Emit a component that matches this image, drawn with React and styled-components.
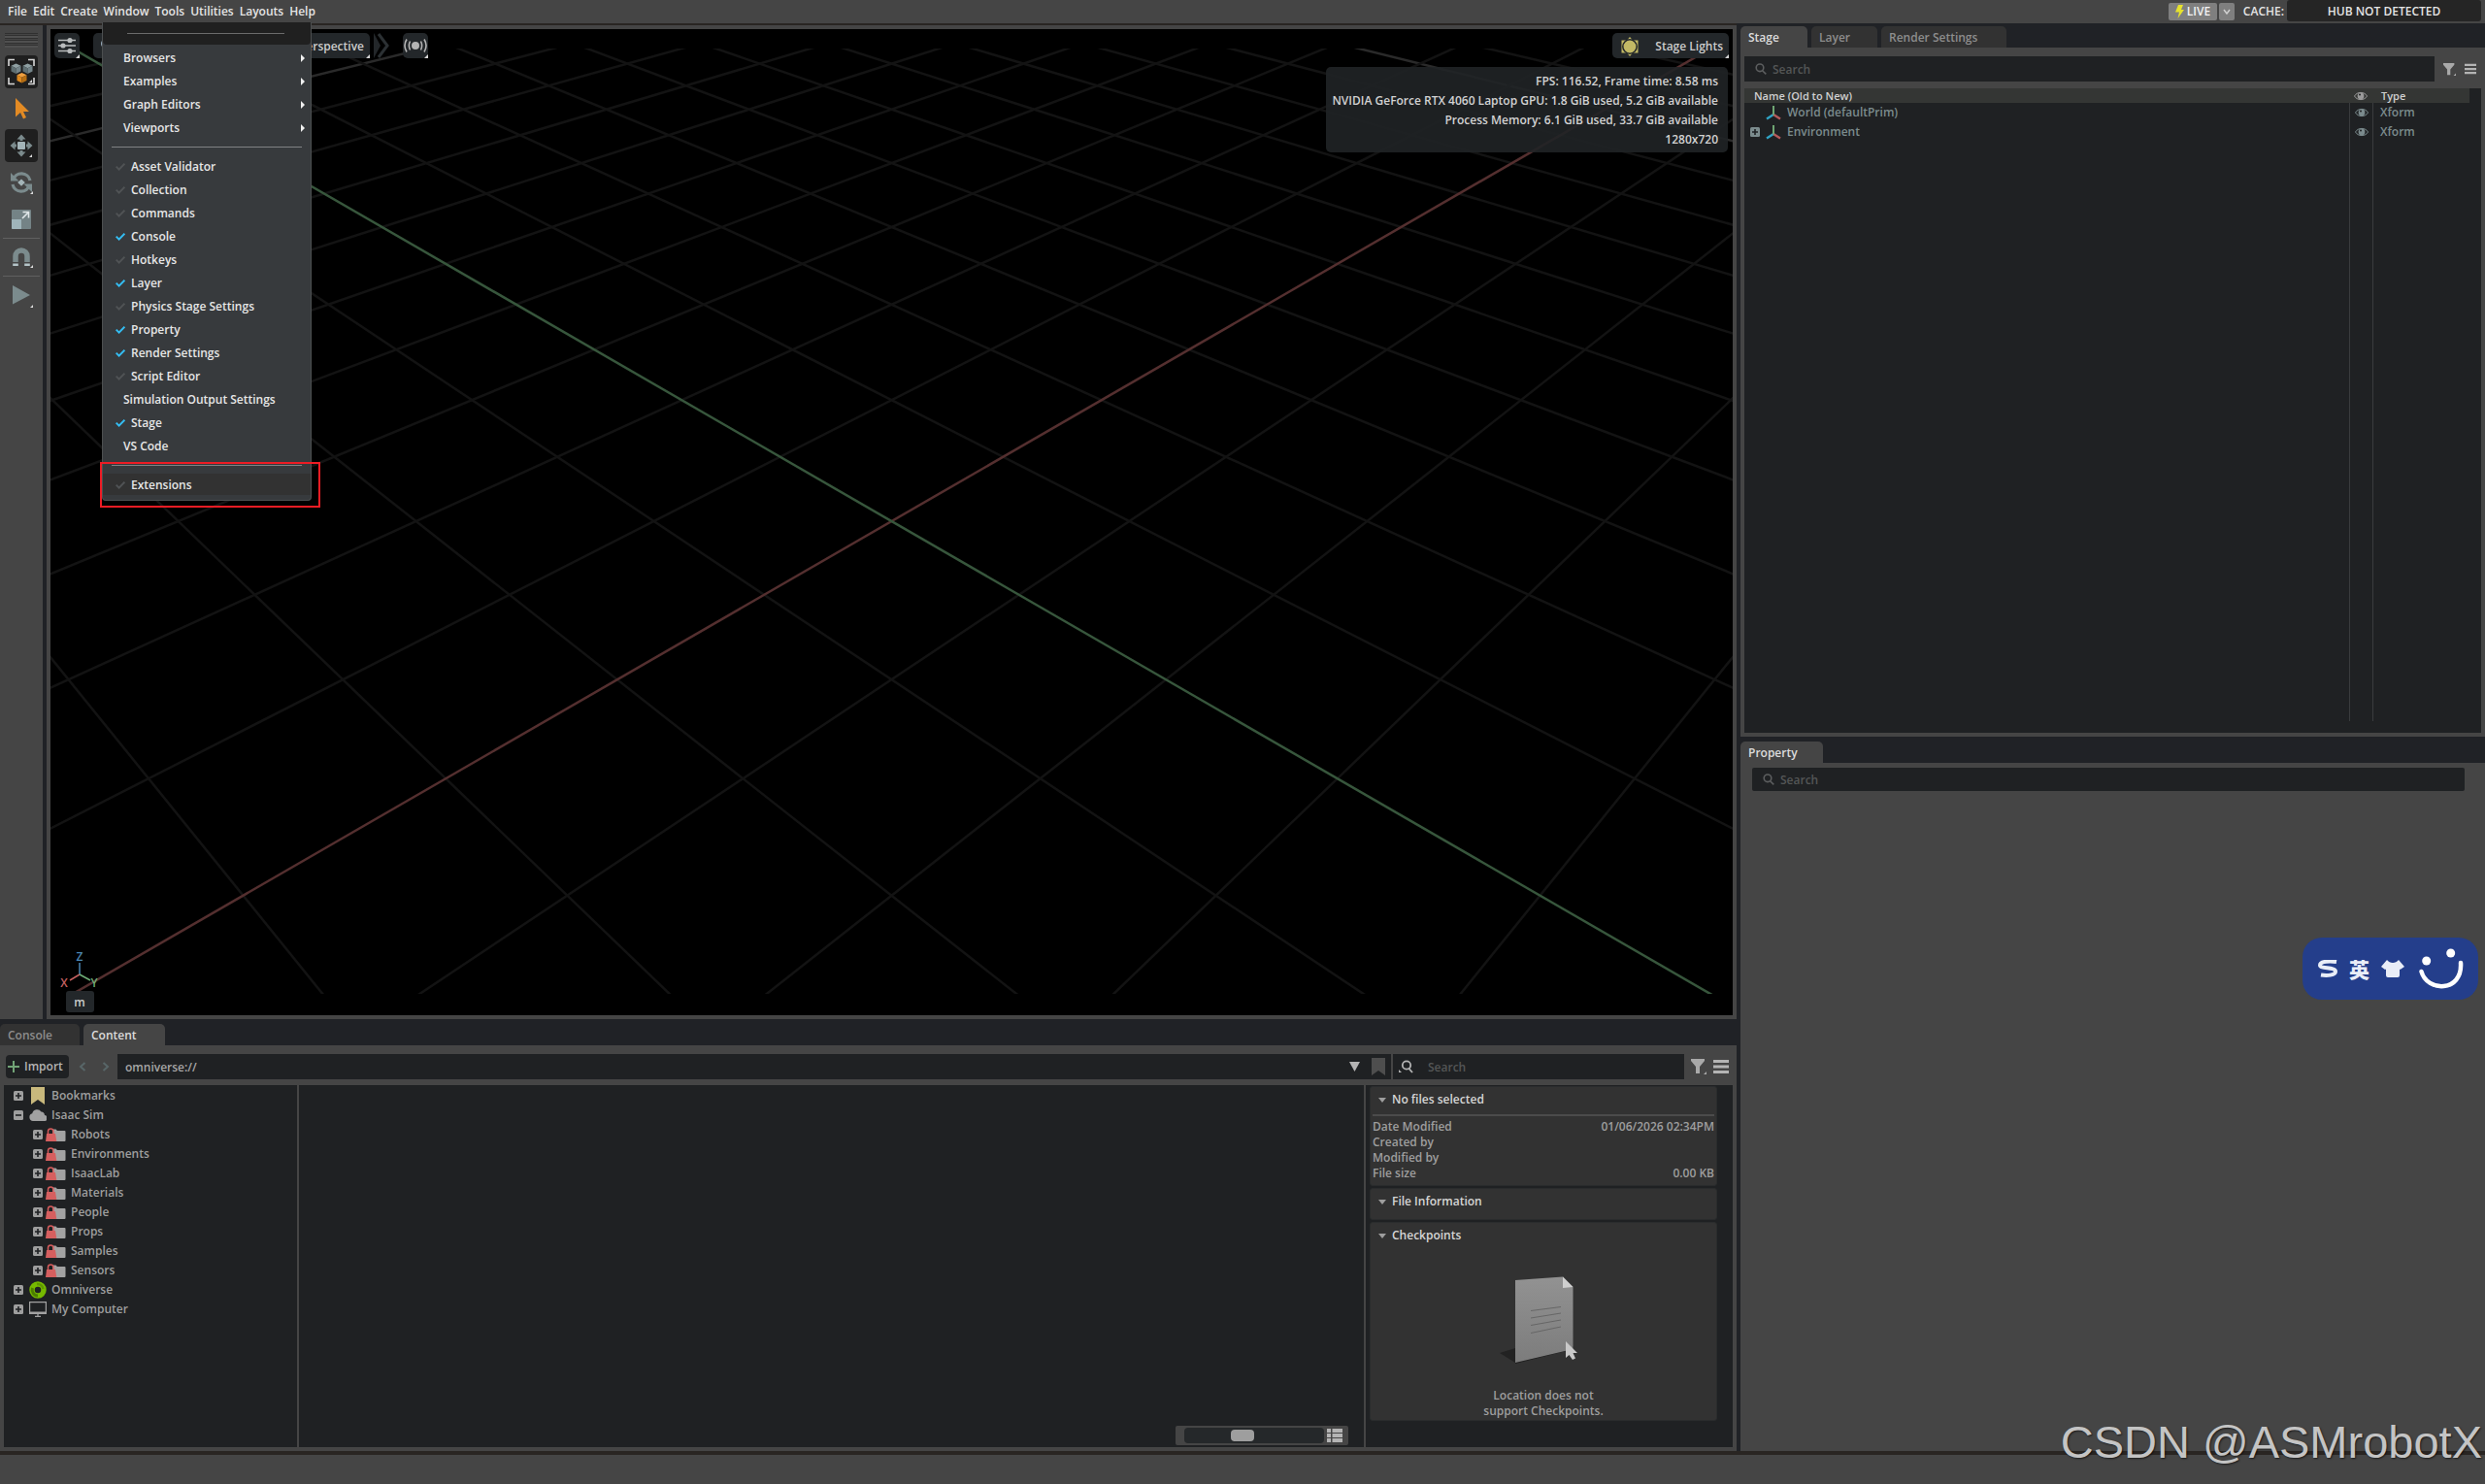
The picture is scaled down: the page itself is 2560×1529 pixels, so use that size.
import React, { useState } from 'react';
import styled, { createGlobalStyle } from 'styled-components';

const GlobalStyle = createGlobalStyle`
  *, *::before, *::after { box-sizing: border-box; }
  html, body, #root { height: 100%; }
  body {
    margin: 0;
    background: #454545;
    color: #cccccc;
    font: 600 12px/16px 'Open Sans', 'Noto Sans', sans-serif;
  }
  button, input, select { font: inherit; color: inherit; }
  button { border: 0; padding: 0; background: none; text-align: left; }
  ul { list-style: none; margin: 0; padding: 0; }
  svg { display: block; flex: none; }
`;

const c = {
  frame: '#454545',
  dark: '#202226',
  well: '#1f2123',
  tab: '#323232',
  steel: '#7b8b8d',
  grey: '#9e9e9e',
};

/* ---------- shell ---------- */

const Shell = styled.div`
  min-height: 100vh;
  display: flex;
  flex-direction: column;
  position: relative;
  overflow: hidden;
`;

const Workspace = styled.main`
  flex: 1;
  display: grid;
  grid-template-columns: minmax(0, 1fr) 767px;
  gap: 4px;
  background: ${c.dark};
`;

const LeftColumn = styled.div`
  display: flex;
  flex-direction: column;
  border-top: 2px solid #292522;
`;

const RightColumn = styled.div`
  display: grid;
  grid-template-rows: 735px 1fr;
`;

const StatusBar = styled.footer`
  height: 34px;
  border-top: 4px solid #292522;
  background: ${c.frame};
`;

/* ---------- menu bar ---------- */

const MenuBar = styled.header`
  display: flex;
  align-items: center;
  height: 24px;
  padding: 0 4px 0 8px;
  background: ${c.frame};
  color: #e4e4e4;
`;

const MenuNav = styled.nav`
  display: flex;
  gap: 6px;
  margin-right: auto;
`;

const LiveButton = styled.button`
  display: flex;
  align-items: center;
  gap: 3px;
  width: 50px;
  height: 18px;
  padding-left: 7px;
  border-radius: 2px;
  background: #7f7f7f;
  color: #f2f2f2;
`;

const LiveCaret = styled.button`
  display: grid;
  place-items: center;
  width: 16px;
  height: 18px;
  margin: 0 9px 0 2px;
  border-radius: 2px;
  background: #7f7f7f;
`;

const HubState = styled.span`
  width: 200px;
  height: 22px;
  margin: 0 0 2px 3px;
  border-radius: 3px;
  background: #252525;
  line-height: 24px;
  text-align: center;
`;

/* ---------- window menu ---------- */

const Dropdown = styled.div`
  position: absolute;
  z-index: 5;
  top: 23px;
  left: 105px;
  width: 216px;
  padding-bottom: 5px;
  border: 1px solid #4c4f50;
  border-top: 0;
  border-radius: 0 0 4px 4px;
  background: #373a3d;
  color: #e6e6e6;
`;

const TearOff = styled.div`
  height: 23px;
  margin-bottom: 2px;
  padding: 11px 27px 0 25px;
  border-radius: 0 0 4px 4px;
  background: #202020;

  &::before {
    content: '';
    display: block;
    height: 1px;
    background: #6b6b6b;
  }
`;

const MenuItem = styled.button`
  display: flex;
  align-items: center;
  gap: 6px;
  width: 100%;
  height: ${p => (p.$hover ? 22 : 24)}px;
  padding: ${p => (p.$hover ? 2 : 0)}px 6px 0 ${p => (p.$plain ? 21 : 13)}px;
  background: ${p => (p.$hover ? '#323232' : 'transparent')};

  span { flex: 1; }
`;

const MenuRule = styled.hr`
  height: 1px;
  margin: 7px 9px 8px;
  border: 0;
  background: #808284;
`;

const RedFrame = styled.div`
  position: absolute;
  z-index: 6;
  top: 476px;
  left: 103px;
  width: 227px;
  height: 47px;
  border: 2px solid #ed1c24;
  pointer-events: none;
`;

/* ---------- tool bar ---------- */

const Stage3D = styled.section`
  flex: 1;
  display: flex;
  gap: 4px;
  min-height: 0;
`;

const ToolBar = styled.aside`
  display: flex;
  flex-direction: column;
  align-items: center;
  width: 44px;
  padding-top: 8px;
  background: ${c.frame};
`;

const Grip = styled.div`
  width: 34px;
  height: 15px;
  margin-bottom: 8px;
  background: repeating-linear-gradient(#303030 0 1px, #454545 1px 2px, #303030 2px 3px, #505050 3px 5px);
`;

const Tool = styled.button`
  display: grid;
  place-items: center;
  width: 34px;
  height: 34px;
  margin-bottom: 4px;
  border-radius: 4px;
  background: ${p => (p.$on ? '#1f1f1f' : 'transparent')};
`;

const ToolRule = styled.hr`
  width: 38px;
  height: 1px;
  margin: -2px 0 2px;
  border: 0;
  background: #606060;
`;

/* ---------- viewport ---------- */

const Viewport = styled.div`
  flex: 1;
  position: relative;
  display: flex;
  align-items: center;
  min-width: 0;
  padding-bottom: 2px;
  overflow: hidden;
  border: 4px solid ${c.frame};
  background: #000;
`;

const GridSvg = styled.svg`
  width: 100%;
  height: auto;
`;

const ViewportBar = styled.div`
  position: absolute;
  top: 4px;
  left: 4px;
  right: 4px;
  display: flex;
`;

const ViewButton = styled.button`
  position: relative;
  display: flex;
  align-items: center;
  justify-content: ${p => (p.$wide ? 'space-between' : 'center')};
  width: ${p => p.$wide || 26}px;
  height: 26px;
  padding: ${p => (p.$wide ? '1px 6px 0 8px' : 0)};
  border-radius: 5px;
  background: #23272a;

  &::after {
    content: '';
    position: absolute;
    right: 0;
    bottom: 0;
    border: 2px solid;
    border-color: transparent #d8d8d8 #d8d8d8 transparent;
  }
`;

const Spacer = styled.span`
  flex: ${p => (p.$w ? 'none' : 1)};
  width: ${p => p.$w || 0}px;
`;

const Stats = styled.div`
  position: absolute;
  top: 39px;
  right: 5px;
  width: 414px;
  padding: 5px 10px 3px 0;
  border-radius: 5px;
  background: rgba(32, 36, 38, 0.9);
  color: #d2d2d2;
  line-height: 20px;
  text-align: right;
`;

const Gizmo = styled.div`
  position: absolute;
  left: 8px;
  bottom: 3px;
  width: 44px;
  display: flex;
  flex-direction: column;
  align-items: center;
`;

const Unit = styled.span`
  width: 29px;
  height: 22px;
  border-radius: 3px;
  background: #23272a;
  line-height: 23px;
  text-align: center;
`;

/* ---------- docks ---------- */

const Dock = styled.section`
  display: flex;
  flex-direction: column;
  min-height: 0;
  height: ${p => p.$height || 'auto'};
`;

const Tabs = styled.div`
  display: flex;
  align-items: flex-end;
  gap: 4px;
  flex: none;
  height: ${p => p.$height}px;
`;

const Tab = styled.button`
  width: ${p => p.$width}px;
  height: 22px;
  padding: 1px 0 0 8px;
  border-radius: 5px 5px 0 0;
  background: ${p => (p.$on ? c.frame : c.tab)};
  color: ${p => (p.$on ? '#dcdcdc' : '#8d8d8d')};
`;

const DockBody = styled.div`
  flex: 1;
  display: flex;
  flex-direction: column;
  min-height: 0;
  padding: ${p => p.$pad};
  background: ${c.frame};
`;

const Bar = styled.div`
  display: flex;
  align-items: center;
`;

const Field = styled.label`
  display: flex;
  align-items: center;
  gap: ${p => p.$gap || 6}px;
  flex: ${p => (p.$width ? 'none' : 1)};
  width: ${p => (p.$width ? `${p.$width}px` : 'auto')};
  height: ${p => p.$height || 26}px;
  padding: 0 6px 0 ${p => p.$left || 11}px;
  border-radius: ${p => p.$round || 0}px;
  background: ${c.well};

  input {
    flex: 1;
    min-width: 0;
    padding: 1px 0 0;
    border: 0;
    outline: 0;
    background: none;
    color: #a6a6a6;
  }
  input::placeholder { color: #545656; opacity: 1; }
`;

const IconButton = styled.button`
  display: grid;
  place-items: center;
  width: ${p => p.$w || 20}px;
  height: 24px;
`;

/* ---------- stage table ---------- */

const TableWell = styled.div`
  flex: 1;
  margin-top: 7px;
  padding: 0 12px 12px 0;
  background: ${c.well};
`;

const PrimTable = styled.table`
  width: 100%;
  height: 100%;
  border-collapse: separate;
  border-spacing: 0;
  table-layout: fixed;
  color: ${c.steel};

  th, td { padding: 0; text-align: left; }
  th {
    height: 15px;
    background: #343634;
    color: #d0d0d0;
    font-size: 11px;
    line-height: 14px;
    font-weight: 600;
  }
  th:first-child { padding-left: 10px; }
  td { height: 20px; }
  td + td { border-left: 1px solid #3a3c3e; }
  td:last-child { padding-left: 7px; }
  th:last-child { padding-left: 9px; }
  tr:last-child td { height: auto; }
  svg { margin: 0 auto; }
`;

const PrimName = styled.span`
  display: flex;
  align-items: center;
  gap: 6px;
  padding-left: 6px;

  svg { margin: 0; }
`;

/* ---------- content browser ---------- */

const ImportButton = styled.button`
  display: flex;
  align-items: center;
  gap: 4px;
  width: 65px;
  height: 24px;
  padding-left: 2px;
  border-radius: 4px;
  background: ${c.well};
  color: #b4b4b4;
`;

const Browser = styled.div`
  flex: 1;
  display: grid;
  grid-template-columns: 302px minmax(0, 1fr) 378px;
  gap: 2px;
  margin-top: 6px;
  min-height: 0;
`;

const Well = styled.div`
  display: flex;
  flex-direction: column;
  background: ${c.well};
  color: ${c.grey};
`;

const Tree = styled(Well)`
  && { padding-top: 1px; }
`;

const TreeRow = styled.li`
  display: flex;
  align-items: center;
  height: 20px;
  padding-left: ${p => (p.$child ? 30 : 10)}px;

  button { display: flex; }
`;

const TreeIcon = styled.span`
  display: grid;
  place-items: center;
  width: ${p => (p.$child ? 27 : 29)}px;
  margin-right: ${p => (p.$child ? 2 : 0)}px;
`;

const ZoomBar = styled.div`
  display: flex;
  align-items: center;
  gap: 3px;
  width: 178px;
  height: 20px;
  margin: auto 16px 2px auto;
  padding: 0 6px 0 9px;
  border-radius: 2px;
  background: ${c.frame};

  input {
    appearance: none;
    width: 144px;
    height: 16px;
    margin: 0;
    border-radius: 4px;
    background: #25282a;
  }
  input::-webkit-slider-thumb {
    appearance: none;
    width: 24px;
    height: 12px;
    border-radius: 4px;
    background: ${c.grey};
  }
`;

const Details = styled(Well)`
  gap: 2px;
  padding: 1px 16px 0 4px;
`;

const Card = styled.section`
  height: ${p => p.$height}px;
  padding: 0 2px;
  border: 1px solid #2a2c2d;
  border-radius: 3px;
  background: #323232;
`;

const CardHead = styled.button`
  display: flex;
  align-items: center;
  gap: 6px;
  width: 100%;
  height: 26px;
  padding-left: 6px;
  color: #d6d6d6;
`;

const Facts = styled.dl`
  display: grid;
  grid-template-columns: auto auto;
  justify-content: space-between;
  margin: 2px 0 0;
  padding-top: 3px;
  border-top: 2px solid #4b4b4b;

  dt, dd { margin: 0; height: 16px; }
  dd { text-align: right; }
`;

const Empty = styled.div`
  display: flex;
  flex-direction: column;
  align-items: center;
  gap: 24px;
  padding-top: 28px;
  text-align: center;

  p { margin: 0; }
`;

/* ---------- floating ---------- */

const ImeBar = styled.div`
  position: absolute;
  top: 966px;
  right: 7px;
  display: flex;
  align-items: center;
  width: 181px;
  height: 64px;
  padding-left: 15px;
  border-radius: 20px;
  background: #243e8b;
  color: #e9edf7;
  font: 900 21px/24px 'Noto Sans CJK SC', sans-serif;

  span { margin: 0 12px 0 11px; }
  svg:last-child { margin-left: 14px; }
`;

const Watermark = styled.div`
  position: absolute;
  right: 3px;
  bottom: 16px;
  color: #c4c4c4;
  font: 400 47px/54px 'Liberation Sans', Arial, sans-serif;
  text-shadow: 1px 1px 2px rgba(0, 0, 0, 0.6);
`;

/* ---------- icons ---------- */

const Check = ({ on }) => (
  <svg width="10" height="10" viewBox="0 0 10 10">
    <path d="M0.7 4.6 3.6 7.6 9.4 1.6" fill="none" stroke={on ? '#34bdf2' : '#505355'} strokeWidth="2" />
  </svg>
);

const Arrow = () => (
  <svg width="4" height="8" viewBox="0 0 4 8"><path d="M0 0 4 4 0 8z" fill="#f0f0f0" /></svg>
);

const Corner = ({ x = 24, y = 24, s = 3 }) => <path d={`M${x + s} ${y}v${s}h${-s}z`} fill="#dadada" />;

const Magnifier = ({ color = '#5c5e5f', size = 12 }) => (
  <svg width={size} height={size} viewBox="0 0 12 12" fill="none" stroke={color} strokeWidth="1.6">
    <circle cx="5" cy="4.8" r="3.8" />
    <path d="M7.6 7.8 11.3 11.4" />
  </svg>
);

const Funnel = ({ size = 16 }) => (
  <svg width={size} height={size} viewBox="0 0 16 16" fill="#a9a9a9">
    <path d="M0 0h14v2L9 8v7H5V8L0 2z" />
    <path d="M16 13v3h-3z" />
  </svg>
);

const Burger = ({ size = 16 }) => (
  <svg width={size} height={size} viewBox="0 0 16 16" fill="#b4b4b4">
    <path d="M0 1h16v3H0zM0 6.5h16v3H0zM0 12h16v3H0z" />
  </svg>
);

const Expander = ({ open, color = c.grey }) => (
  <svg width="10" height="10" viewBox="0 0 10 10">
    <rect width="10" height="10" rx="1.5" fill={color} />
    <path d={open ? 'M2 5h6' : 'M2 5h6M5 2v6'} stroke="#1f2123" strokeWidth="1.6" />
  </svg>
);

const Eye = ({ color = c.steel }) => (
  <svg width="14" height="10" viewBox="0 0 14 10">
    <path d="M0.5 5C3 .2 11 .2 13.5 5 11 9.8 3 9.8.5 5z" fill="none" stroke={color} />
    <circle cx="7" cy="5" r="3.4" fill={color} />
    <circle cx="6" cy="3.6" r="1" fill="#1f2123" />
  </svg>
);

const Xform = () => (
  <svg width="16" height="16" viewBox="0 0 16 16" fill="none" strokeWidth="2">
    <path d="M8 10 1 14.5" stroke="#2fa3c4" strokeWidth="2.4" />
    <path d="M8 10l7 4.5" stroke="#b55a5a" strokeWidth="2.4" />
    <path d="M8 1v9.5" stroke="#6fa673" />
  </svg>
);

const LockedFolder = () => (
  <svg width="21" height="15" viewBox="0 0 21 15">
    <path d="M7 1.500h3.500l1.500 1.500H19.500a1 1 0 0 1 1 1V13a1 1 0 0 1-1 1H8z" fill="#a2a2a2" />
    <path d="M2.500 7V3.600a2.700 2.700 0 0 1 5.400 0V7" fill="none" stroke="#d65c5c" strokeWidth="1.500" />
    <path d="M1 6h9l1.300 8H0z" fill="#d65f5f" />
  </svg>
);

const Cube = ({ x, y, tones }) => (
  <g transform={`translate(${x} ${y})`}>
    <path d="M5 0l5 2.300L5 4.800 0 2.300z" fill={tones[0]} />
    <path d="M0 2.300 5 4.800V10.500L0 8z" fill={tones[1]} />
    <path d="M10 2.300 5 4.800V10.500L10 8z" fill={tones[2]} />
  </g>
);

const treeIcons = {
  bookmark: (
    <svg width="14" height="18" viewBox="0 0 14 18"><path d="M0 0h14v18l-7-5-7 5z" fill="#c8b87c" /></svg>
  ),
  cloud: (
    <svg width="18" height="12" viewBox="0 0 18 12">
      <path d="M4 12a4 4 0 0 1-.800-7.800A5.200 5.200 0 0 1 12.500 2.500 4 4 0 0 1 16 6a3 3 0 0 1-1 6z" fill="#a2a2a2" />
    </svg>
  ),
  ring: (
    <svg width="18" height="18" viewBox="0 0 18 18" fill="none">
      <circle cx="9" cy="9" r="6" stroke="#76b900" strokeWidth="5.500" />
      <path d="M3.500 7A6 6 0 0 0 9 15" stroke="#4c7d00" strokeWidth="3" />
      <path d="M8 3a6 6 0 0 1 6.500 5" stroke="#5f9600" strokeWidth="2.500" />
    </svg>
  ),
  computer: (
    <svg width="18" height="16" viewBox="0 0 18 16" fill="none" stroke="#a2a2a2">
      <path d="M.600.600h16.800v11.800H.600z" strokeWidth="1.200" />
      <path d="M1 11.500h16" strokeWidth="2" />
      <path d="M9 12.500v2.500M6 15.400h6" strokeWidth="1.300" />
    </svg>
  ),
};

/* ---------- data ---------- */

const menus = ['File', 'Edit', 'Create', 'Window', 'Tools', 'Utilities', 'Layouts', 'Help'];
const submenus = ['Browsers', 'Examples', 'Graph Editors', 'Viewports'];
const windows = [
  ['Asset Validator', false],
  ['Collection', false],
  ['Commands', false],
  ['Console', true],
  ['Hotkeys', false],
  ['Layer', true],
  ['Physics Stage Settings', false],
  ['Property', true],
  ['Render Settings', true],
  ['Script Editor', false],
  ['Simulation Output Settings', null],
  ['Stage', true],
  ['VS Code', null],
];
const folders = ['Robots', 'Environments', 'IsaacLab', 'Materials', 'People', 'Props', 'Samples', 'Sensors'];

/* ---------- ground grid ---------- */

const W = 1733;
const H = 974;
const FOCAL = 1500;
const EYE = 5;

// camera at (5, 5, 5) looking at the origin, z up
const project = (x, y) => {
  const depth = EYE * Math.sqrt(3) - (x + y) / Math.sqrt(3);
  const px = W / 2 + (FOCAL * (y - x)) / Math.SQRT2 / depth;
  const py = H / 2 + (FOCAL * (x + y)) / Math.sqrt(6) / depth;
  return `${px.toFixed(1)} ${py.toFixed(1)}`;
};

const gridLine = (k, alongX) => {
  const near = 14 - k;
  const a = alongX ? project(-60, k) : project(k, -60);
  const b = alongX ? project(near, k) : project(k, near);
  return `M${a}L${b}`;
};

const steps = Array.from({ length: 52 }, (_, i) => i - 40).filter(k => k !== 0);

const GroundGrid = () => (
  <GridSvg viewBox={`0 0 ${W} ${H}`} fill="none" strokeWidth="2.500">
    {steps.map(k => (
      <path
        key={k}
        d={gridLine(k, true) + gridLine(k, false)}
        stroke={k % 10 === 0 ? '#2a2a2a' : '#131313'}
      />
    ))}
    <path d={gridLine(0, true)} stroke="#542f2f" />
    <path d={gridLine(0, false)} stroke="#37563c" />
  </GridSvg>
);

/* ---------- parts ---------- */

const WindowMenu = () => (
  <Dropdown role="menu">
    <TearOff />
    {submenus.map(name => (
      <MenuItem key={name} role="menuitem" $plain><span>{name}</span><Arrow /></MenuItem>
    ))}
    <MenuRule />
    {windows.map(([name, on]) => (
      <MenuItem key={name} role="menuitem" $plain={on === null}>
        {on !== null && <Check on={on} />}
        <span>{name}</span>
      </MenuItem>
    ))}
    <MenuRule />
    <MenuItem role="menuitem" $hover><Check /><span>Extensions</span></MenuItem>
  </Dropdown>
);

const steel = ['#8fa0a3', '#5f6f72', '#74858a'];

const Tools = () => (
  <ToolBar>
    <Grip />
    <Tool $on aria-label="Selection mode">
      <svg width="28" height="28" viewBox="0 0 28 28">
        <path d="M7 1.500H1V8M21 1.500h6V8M7 26.500H1V20M21 26.500h6V20" fill="none" stroke="#d6d6d6" strokeWidth="1.600" />
        <Cube x={3.500} y={5.500} tones={steel} />
        <Cube x={15.500} y={5.500} tones={steel} />
        <Cube x={9.500} y={15} tones={['#f0a040', '#e08a1e', '#b86f12']} />
        <Corner x={22} y={22} />
      </svg>
    </Tool>
    <Tool aria-label="Select">
      <svg width="28" height="28" viewBox="0 0 28 28">
        <path d="M8 3 22 17h-6l3 6-3 1.500-3-6.500-5 4.500z" fill="#e38b24" />
      </svg>
    </Tool>
    <Tool $on aria-label="Move">
      <svg width="28" height="28" viewBox="0 0 28 28" fill={c.steel}>
        <rect x="10" y="10" width="8" height="8" rx="1" fill="#a3b4b8" />
        <path d="M14 2.500l4.500 5h-3V9h-3V7.500h-3zM14 25.500l4.500-5h-3V19h-3v1.500h-3zM2.500 14l5-4.500v3H9v3H7.500v3zM25.500 14l-5-4.500v3H19v3h1.500v3z" />
        <Corner x={22} y={23} />
      </svg>
    </Tool>
    <Tool aria-label="Rotate">
      <svg width="28" height="28" viewBox="0 0 28 28">
        <path d="M5.500 11.500A9 9 0 0 1 23 12M22.500 16.500A9 9 0 0 1 5 16" fill="none" stroke={c.steel} strokeWidth="3.200" />
        <path d="M3 4v8.500h8.500zM25 24v-8.500h-8.500z" fill={c.steel} />
        <path d="M14 10.500l3.800 3.500-3.800 3.800-3.800-3.800z" fill="#a3b4b8" />
        <Corner x={23} y={23} />
      </svg>
    </Tool>
    <Tool aria-label="Scale">
      <svg width="28" height="28" viewBox="0 0 28 28">
        <rect x="4" y="4" width="20" height="20" rx="1" fill="#748386" />
        <path d="M4 14h10v10H5a1 1 0 0 1-1-1z" fill="#9fb4ba" />
        <path d="M15.500 6.500h6v6M21 7l-6 6" fill="none" stroke="#dfe6e8" strokeWidth="1.600" />
      </svg>
    </Tool>
    <ToolRule />
    <Tool aria-label="Snap">
      <svg width="28" height="28" viewBox="0 0 28 28">
        <path d="M8 19v-6a6 6 0 0 1 12 0v6" fill="none" stroke={c.steel} strokeWidth="5.500" />
        <path d="M5.200 20.500h5.600V23H5.200zM17.200 20.500h5.600V23h-5.600z" fill="#b4c4c8" />
        <Corner x={23} y={22} />
      </svg>
    </Tool>
    <ToolRule />
    <Tool aria-label="Play">
      <svg width="28" height="28" viewBox="0 0 28 28">
        <path d="M5 4l18 10L5 23.500z" fill={c.steel} />
        <Corner x={23} y={24} />
      </svg>
    </Tool>
  </ToolBar>
);

const ViewportPane = () => (
  <Viewport>
    <GroundGrid />
    <ViewportBar>
      <ViewButton aria-label="Viewport settings">
        <svg width="18" height="18" viewBox="0 0 18 18" stroke="#b9bcbd" fill="#b9bcbd" strokeWidth="1.600">
          <path d="M0 3.500h18M0 9h18M0 14.500h18" />
          <circle cx="12" cy="3.500" r="1.800" /><circle cx="5" cy="9" r="1.800" /><circle cx="12" cy="14.500" r="1.800" />
        </svg>
      </ViewButton>
      <Spacer $w={14} />
      <ViewButton $wide={285}>
        <svg width="16" height="16" viewBox="0 0 16 16" fill="none" stroke="#9db0c0" strokeWidth="2">
          <circle cx="5" cy="5" r="4" /><path d="M5 9v6h10V6" />
        </svg>
        Perspective
      </ViewButton>
      <Spacer $w={4} />
      <svg width="16" height="26" viewBox="0 0 16 26">
        <path d="M0 0 7 13 0 26z" fill="#23272a" />
        <path d="M5 1l9 12-9 12" fill="none" stroke="#2b3033" strokeWidth="3" />
      </svg>
      <Spacer $w={14} />
      <ViewButton aria-label="Streaming">
        <svg width="24" height="16" viewBox="0 0 24 16" fill="none" stroke="#b4b4b4" strokeWidth="1.600">
          <circle cx="12" cy="8" r="4" fill="#b4b4b4" stroke="none" />
          <path d="M6.500 3.500c-1.500 3-1.500 6 0 9M17.500 3.500c1.500 3 1.500 6 0 9M3 1.500c-2.500 4-2.500 9 0 13M21 1.500c2.500 4 2.500 9 0 13" />
        </svg>
      </ViewButton>
      <Spacer />
      <ViewButton $wide={120}>
        <svg width="20" height="20" viewBox="0 0 20 20" fill="#c2b965">
          <path d="M10 0l3 3.500h5.500v13H13L10 20l-3-3.500H1.500v-13H7z" />
          <circle cx="10" cy="10" r="7.200" stroke="#23272a" strokeWidth="1.500" />
        </svg>
        Stage Lights
      </ViewButton>
    </ViewportBar>
    <Stats>
      <div>FPS: 116.52, Frame time: 8.58 ms</div>
      <div>NVIDIA GeForce RTX 4060 Laptop GPU: 1.8 GiB used, 5.2 GiB available</div>
      <div>Process Memory: 6.1 GiB used, 33.7 GiB available</div>
      <div>1280x720</div>
    </Stats>
    <Gizmo>
      <svg width="44" height="48" viewBox="0 -6 44 48" fontSize="12" textAnchor="middle" strokeWidth="1.500">
        <path d="M22 25V13" stroke="#4b86b4" />
        <path d="M22 25l-10 6" stroke="#c46060" />
        <path d="M22 25l11 6" stroke="#6fae77" />
        <text x="22" y="11" fill="#4b86b4">Z</text>
        <text x="6" y="38" fill="#c46060">X</text>
        <text x="37" y="38" fill="#6fae77">Y</text>
      </svg>
      <Unit>m</Unit>
    </Gizmo>
  </Viewport>
);

const Node = ({ label, icon, open, child }) => (
  <TreeRow $child={child}>
    <button aria-label={`Toggle ${label}`}><Expander open={open} /></button>
    <TreeIcon $child={child}>{icon}</TreeIcon>
    {label}
  </TreeRow>
);

const Head = ({ children }) => (
  <CardHead>
    <svg width="8" height="5" viewBox="0 0 8 5"><path d="M0 0h8L4 5z" fill={c.grey} /></svg>
    {children}
  </CardHead>
);

const Checkpoint = () => (
  <svg width="92" height="92" viewBox="0 0 92 92">
    <defs>
      <linearGradient id="sheet" x1="0" y1="0" x2="0" y2="1">
        <stop offset="0" stopColor="#929292" />
        <stop offset="1" stopColor="#7c7c7c" />
      </linearGradient>
    </defs>
    <path d="M1 80l16-5v15z" fill="#222" />
    <path d="M17 91l60-15v-3L17 88z" fill="#1e1e1e" />
    <path d="M17 5l49-3.500 10.500 10.500V76L17 90z" fill="url(#sheet)" />
    <path d="M66 1.500 76.500 12 66 13z" fill="#cfcfcf" />
    <path d="M33 36.500l31-4M33 44l31-5M33 51.500l31-5.500M33 59.500l31-6.500" stroke="#666" />
    <path d="M69 68v17l3.500-3 3.500 5 3-1.500-2.500-5.500H81z" fill="#c9c9c9" />
  </svg>
);

const ContentDock = () => {
  const [path, setPath] = useState('omniverse://');
  const [size, setSize] = useState(40);
  return (
    <Dock $height="445px">
      <Tabs $height={27}>
        <Tab $width={82}>Console</Tab>
        <Tab $on $width={84}>Content</Tab>
      </Tabs>
      <DockBody $pad="9px 4px 4px">
        <Bar>
          <Spacer $w={2} />
          <ImportButton>
            <svg width="13" height="12" viewBox="0 0 13 12"><path d="M0 6h12M6 0v12" stroke="#71a376" strokeWidth="2" /></svg>
            Import
          </ImportButton>
          <Spacer $w={2} />
          <IconButton $w={24} aria-label="Back">
            <svg width="8" height="10" viewBox="0 0 8 10"><path d="M6.500 1 2 5l4.500 4" fill="none" stroke="#586668" strokeWidth="2" /></svg>
          </IconButton>
          <IconButton $w={24} aria-label="Forward">
            <svg width="8" height="10" viewBox="0 0 8 10"><path d="M1.500 1 6 5 1.500 9" fill="none" stroke="#586668" strokeWidth="2" /></svg>
          </IconButton>
          <Field $left={8} $gap={12}>
            <input aria-label="Path" value={path} onChange={e => setPath(e.target.value)} />
            <svg width="11" height="10" viewBox="0 0 11 10"><path d="M0 0h11L5.500 10z" fill="#b4b4b4" /></svg>
            <svg width="14" height="18" viewBox="0 0 14 18"><path d="M0 0h14v18l-7-5-7 5z" fill="#4e4e4e" /></svg>
          </Field>
          <Spacer $w={2} />
          <Field $width={300} $left={6} $gap={15}>
            <svg width="15" height="14" viewBox="0 0 15 14" fill="none" stroke="#b4b4b4" strokeWidth="1.800">
              <circle cx="8" cy="5.500" r="4.200" /><path d="M10.500 9l3.500 4" />
              <path d="M0 10v3h3z" fill="#b4b4b4" stroke="none" />
            </svg>
            <input aria-label="Search files" placeholder="Search" />
          </Field>
          <Spacer $w={4} />
          <IconButton $w={22} aria-label="Filter"><Funnel /></IconButton>
          <IconButton $w={24} aria-label="Options"><Burger /></IconButton>
        </Bar>
        <Browser>
          <Tree as="ul">
            <Node label="Bookmarks" icon={treeIcons.bookmark} />
            <Node label="Isaac Sim" icon={treeIcons.cloud} open />
            {folders.map(name => <Node key={name} label={name} icon={<LockedFolder />} child />)}
            <Node label="Omniverse" icon={treeIcons.ring} />
            <Node label="My Computer" icon={treeIcons.computer} />
          </Tree>
          <Well>
            <ZoomBar>
              <input type="range" aria-label="Thumbnail size" value={size} onChange={e => setSize(e.target.value)} />
              <button aria-label="List view">
                <svg width="16" height="14" viewBox="0 0 16 14" fill="#b4b4b4">
                  <path d="M0 0h4v4H0zM5.500 0H16v4H5.500zM0 5h4v4H0zM5.500 5H16v4H5.500zM0 10h4v4H0zM5.500 10H16v4H5.500z" />
                </svg>
              </button>
            </ZoomBar>
          </Well>
          <Details>
            <Card $height={103}>
              <Head>No files selected</Head>
              <Facts>
                <dt>Date Modified</dt><dd>01/06/2026 02:34PM</dd>
                <dt>Created by</dt><dd />
                <dt>Modified by</dt><dd />
                <dt>File size</dt><dd>0.00 KB</dd>
              </Facts>
            </Card>
            <Card $height={33}><Head>File Information</Head></Card>
            <Card $height={205}>
              <Head>Checkpoints</Head>
              <Empty>
                <Checkpoint />
                <p>Location does not<br />support Checkpoints.</p>
              </Empty>
            </Card>
          </Details>
        </Browser>
      </DockBody>
    </Dock>
  );
};

const StageDock = () => (
  <Dock>
    <Tabs $height={25}>
      <Tab $on $width={69}>Stage</Tab>
      <Tab $width={68}>Layer</Tab>
      <Tab $width={129}>Render Settings</Tab>
    </Tabs>
    <DockBody $pad="9px 4px 4px">
      <Bar>
        <Field>
          <Magnifier />
          <input aria-label="Search stage" placeholder="Search" />
        </Field>
        <Spacer $w={4} />
        <IconButton $w={22} aria-label="Filter"><Funnel size={13} /></IconButton>
        <IconButton $w={22} aria-label="Options"><Burger size={12} /></IconButton>
      </Bar>
      <TableWell>
        <PrimTable>
          <colgroup><col /><col width="24" /><col width="100" /></colgroup>
          <thead>
            <tr>
              <th>Name (Old to New)</th>
              <th aria-label="Visibility"><Eye color="#9a9a9a" /></th>
              <th>Type</th>
            </tr>
          </thead>
          <tbody>
            <tr>
              <td><PrimName><Spacer $w={10} /><Xform />World (defaultPrim)</PrimName></td>
              <td><Eye /></td>
              <td>Xform</td>
            </tr>
            <tr>
              <td><PrimName><Expander color={c.steel} /><Xform />Environment</PrimName></td>
              <td><Eye /></td>
              <td>Xform</td>
            </tr>
            <tr aria-hidden="true"><td /><td /><td /></tr>
          </tbody>
        </PrimTable>
      </TableWell>
    </DockBody>
  </Dock>
);

const PropertyDock = () => (
  <Dock>
    <Tabs $height={27}>
      <Tab $on $width={85}>Property</Tab>
    </Tabs>
    <DockBody $pad="5px 21px 0 12px">
      <Bar>
        <Field $height={24} $round={2}>
          <Magnifier />
          <input aria-label="Search properties" placeholder="Search" />
        </Field>
      </Bar>
    </DockBody>
  </Dock>
);

const App = () => (
  <Shell>
    <GlobalStyle />
    <MenuBar>
      <MenuNav>{menus.map(name => <button key={name}>{name}</button>)}</MenuNav>
      <LiveButton>
        <svg width="9" height="14" viewBox="0 0 9 14"><path d="M3 0h5L6 5h3L2.500 14 4 7.500H0z" fill="#e6e22e" /></svg>
        LIVE
      </LiveButton>
      <LiveCaret aria-label="Live options">
        <svg width="8" height="6" viewBox="0 0 8 6"><path d="M1 1l3 4 3-4" fill="none" stroke="#d0d0d0" strokeWidth="1.500" /></svg>
      </LiveCaret>
      CACHE:
      <HubState>HUB NOT DETECTED</HubState>
    </MenuBar>
    <Workspace>
      <LeftColumn>
        <Stage3D>
          <Tools />
          <ViewportPane />
        </Stage3D>
        <ContentDock />
      </LeftColumn>
      <RightColumn>
        <StageDock />
        <PropertyDock />
      </RightColumn>
    </Workspace>
    <StatusBar />
    <WindowMenu />
    <RedFrame />
    <ImeBar>
      <svg width="22" height="18" viewBox="0 0 22 18">
        <path d="M20 2C14 1 3 1 3 5.500 3 9.500 19 7 19 12c0 4-9 4.500-15 3.500" fill="none" stroke="#e9edf7" strokeWidth="4" />
      </svg>
      <span>英</span>
      <svg width="24" height="18" viewBox="0 0 24 18">
        <path d="M6 0c3 4 9 4 12 0l6 7-4.500 3-.500-.500V16a2 2 0 0 1-2 2H7a2 2 0 0 1-2-2V9.500L4 10 0 7z" fill="#e9edf7" />
      </svg>
      <svg width="48" height="44" viewBox="0 0 48 44" fill="#fff">
        <circle cx="8.700" cy="14" r="4.500" />
        <circle cx="33.700" cy="6" r="4.500" />
        <path d="M3.500 25C9 46 46 47 44 16" fill="none" stroke="#fff" strokeWidth="4.500" strokeLinecap="round" />
      </svg>
    </ImeBar>
    <Watermark>CSDN @ASMrobotX</Watermark>
  </Shell>
);

export default App;
